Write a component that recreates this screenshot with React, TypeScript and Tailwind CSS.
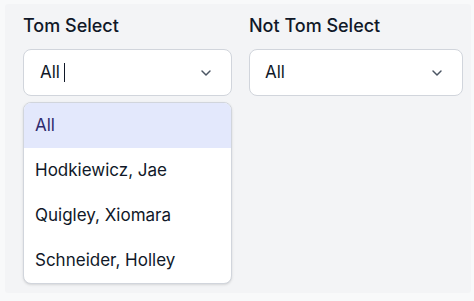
import React from 'react';

const options = ['All', 'Hodkiewicz, Jae', 'Quigley, Xiomara', 'Schneider, Holley'];

const Chevron: React.FC = () => (
  <svg width="16" height="16" viewBox="0 0 24 24" fill="none" stroke="#4b5563" strokeWidth="2.2" strokeLinecap="round" strokeLinejoin="round">
    <path d="M6 9l6 6 6-6" />
  </svg>
);

export default function App() {
  return (
    <div className="w-[474px] h-[301px] bg-[#f8f9fa] p-[4px_3px_8px_5px] font-['Inter',sans-serif]">
      <div className="h-full bg-[#f3f4f6] rounded-[3px] flex gap-[17px] pl-[18px] pt-[9px]">
        <div className="w-[209px] flex flex-col">
          <label className="text-[18px] font-medium text-gray-900 leading-[26px]">Tom Select</label>
          <div className="mt-[10px] h-[47px] bg-white border border-gray-300 rounded-[8px] flex items-center justify-between pl-[16px] pr-[17px]">
            <div className="flex items-center text-[17px] text-gray-900">
              <span>All</span>
              <span className="ml-[4px] w-px h-[19px] bg-gray-900" />
            </div>
            <Chevron />
          </div>
          <ul className="mt-[6px] bg-white border border-gray-300 rounded-[8px] shadow-sm overflow-hidden">
            {options.map((o, i) => (
              <li
                key={o}
                className={`h-[45px] flex items-center px-[11px] text-[17px] ${i === 0 ? 'bg-[#e3e8fc] text-[#2e2a6e]' : 'text-gray-900'}`}
              >
                {o}
              </li>
            ))}
          </ul>
        </div>
        <div className="w-[214px] flex flex-col">
          <label className="text-[18px] font-medium text-gray-900 leading-[26px]">Not Tom Select</label>
          <div className="mt-[10px] h-[47px] bg-white border border-gray-300 rounded-[8px] flex items-center justify-between pl-[15px] pr-[17px]">
            <span className="text-[17px] text-gray-900">All</span>
            <Chevron />
          </div>
        </div>
      </div>
    </div>
  );
}
